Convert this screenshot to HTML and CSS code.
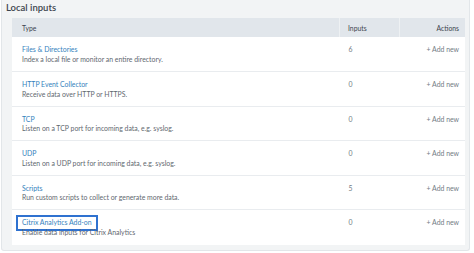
FILE: index.html
```html
<!DOCTYPE html>
<html lang="en">
<head>
    <meta charset="UTF-8">
    <meta name="viewport" content="width=device-width, initial-scale=1.0">
    <title>Local inputs</title>
    <link rel="stylesheet" href="styles.css">
</head>
<body>
    <div class="panel">
        <h2 class="panel-title">Local inputs</h2>

        <!-- Tabla de entradas locales -->
        <table class="inputs-table">
            <thead>
                <tr>
                    <th class="col-type">Type</th>
                    <th class="col-inputs">Inputs</th>
                    <th class="col-actions">Actions</th>
                </tr>
            </thead>
            <tbody>
                <tr>
                    <td>
                        <a class="input-name" href="#">Files &amp; Directories</a>
                        <p class="input-desc">Index a local file or monitor an entire directory.</p>
                    </td>
                    <td class="count">6</td>
                    <td class="action"><a href="#">+ Add new</a></td>
                </tr>
                <tr>
                    <td>
                        <a class="input-name" href="#">HTTP Event Collector</a>
                        <p class="input-desc">Receive data over HTTP or HTTPS.</p>
                    </td>
                    <td class="count">0</td>
                    <td class="action"><a href="#">+ Add new</a></td>
                </tr>
                <tr>
                    <td>
                        <a class="input-name" href="#">TCP</a>
                        <p class="input-desc">Listen on a TCP port for incoming data, e.g. syslog.</p>
                    </td>
                    <td class="count">0</td>
                    <td class="action"><a href="#">+ Add new</a></td>
                </tr>
                <tr>
                    <td>
                        <a class="input-name" href="#">UDP</a>
                        <p class="input-desc">Listen on a UDP port for incoming data, e.g. syslog.</p>
                    </td>
                    <td class="count">0</td>
                    <td class="action"><a href="#">+ Add new</a></td>
                </tr>
                <tr>
                    <td>
                        <a class="input-name" href="#">Scripts</a>
                        <p class="input-desc">Run custom scripts to collect or generate more data.</p>
                    </td>
                    <td class="count">5</td>
                    <td class="action"><a href="#">+ Add new</a></td>
                </tr>
                <tr>
                    <td>
                        <a class="input-name focused" href="#">Citrix Analytics Add-on</a>
                        <p class="input-desc">Enable data inputs for Citrix Analytics</p>
                    </td>
                    <td class="count">0</td>
                    <td class="action"><a href="#">+ Add new</a></td>
                </tr>
            </tbody>
        </table>
    </div>
</body>
</html>
```

FILE: styles.css
```css
/* Panel de entradas locales */
body {
    margin: 0;
    background-color: #fff;
    font-family: 'Lato', 'Liberation Sans', sans-serif;
}

.panel {
    width: 469px;
    height: 251px;
    margin-left: 1px;
    padding: 0 5px 0 10px;
    box-sizing: border-box;
    background-color: #f2f4f5;
    border: 1px solid #e2e6e9;
    border-top: none;
    border-radius: 0 0 3px 3px;
}

.panel-title {
    margin: 0 0 0 -6px;
    padding-top: 2px;
    height: 16px;
    font-size: 9.5px;
    font-weight: 600;
    color: #3c444d;
}

.inputs-table {
    width: 453px;
    border-collapse: collapse;
    background-color: #fff;
}

th {
    height: 19px;
    padding: 0 6px 0 10px;
    background-color: #e1e6eb;
    font-size: 6.8px;
    font-weight: normal;
    color: #3c444d;
    text-align: left;
}

.col-type {
    width: 311px;
    border-right: 1px solid #eef1f3;
}

.col-inputs {
    width: 45px;
    padding-left: 8px;
    border-right: 1px solid #eef1f3;
}

.col-actions {
    text-align: right;
}

tbody tr {
    height: 34.6px;
}

td {
    padding: 8px 6px 0 10px;
    border-bottom: 1px solid #e9ecef;
    vertical-align: top;
    font-size: 6.9px;
    line-height: 9.5px;
    color: #5f6870;
}

.input-name {
    display: inline-block;
    color: #3582bd;
    text-decoration: none;
    line-height: 9.5px;
}

.input-name.focused {
    outline: 2px solid #2f72d0;
    outline-offset: 1px;
    padding: 0 3px;
    margin-left: -3px;
}

.input-desc {
    margin: 0;
    line-height: 9.5px;
}

.count {
    padding-left: 9px;
    color: #737c85;
}

.action {
    text-align: right;
}

.action a {
    color: #737c85;
    text-decoration: none;
}

tbody tr:last-child td {
    border-bottom: none;
}
```
